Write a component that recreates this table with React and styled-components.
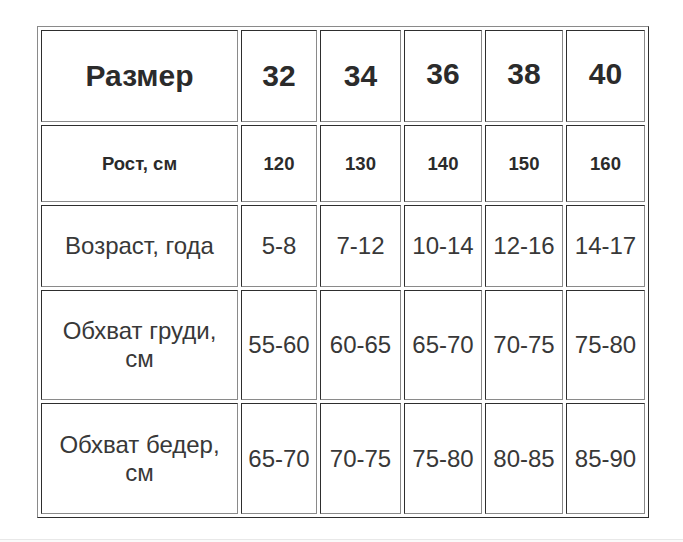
import { Fragment } from "react"
import styled, { createGlobalStyle } from "styled-components"

const GlobalStyle = createGlobalStyle`
  html, body {
    margin: 0;
    padding: 0;
    background: #fff;
    font-family: "Liberation Sans", Arial, sans-serif;
    color: #333;
  }
`

const Page = styled.div`
  padding: 26px 0 0 37px;
`

const SizeTable = styled.div`
  display: grid;
  grid-template-columns: 197px 76px 81px 78px 78px 79px;
  grid-template-rows: 92px 77px 82px 110px 111px;
  gap: 3px;
  padding: 3px;
  width: fit-content;
  border: 1px solid;
  border-color: #8a8a8a #2e2e2e #2e2e2e #8a8a8a;
`

const Cell = styled.div`
  box-sizing: border-box;
  display: flex;
  align-items: center;
  justify-content: center;
  text-align: center;
  border: 1px solid;
  border-color: #2e2e2e #8a8a8a #8a8a8a #2e2e2e;
  padding: 0 2px ${p => (p.$lift ? 5 : 0)}px;
  font-size: ${p => (p.$kind === "head" ? 30 : p.$kind === "sub" ? 18.5 : 24)}px;
  font-weight: ${p => (p.$kind === "data" ? 400 : 700)};
  line-height: 28px;
  color: ${p => (p.$kind === "data" ? "#383838" : "#2b2b2b")};
`

const Footer = styled.div`
  margin-top: 21px;
  height: 3px;
  border-top: 1px solid #e8e8e8;
  background: #fafafa;
`

const sizes = ["32", "34", "36", "38", "40"]
const rows = [
  { label: "Рост, см", kind: "sub", values: ["120", "130", "140", "150", "160"] },
  { label: "Возраст, года", kind: "data", values: ["5-8", "7-12", "10-14", "12-16", "14-17"] },
  { label: ["Обхват груди,", "см"], kind: "data", values: ["55-60", "60-65", "65-70", "70-75", "75-80"] },
  { label: ["Обхват бедер,", "см"], kind: "data", values: ["65-70", "70-75", "75-80", "80-85", "85-90"] },
]

export default function App() {
  return (
    <>
      <GlobalStyle />
      <Page>
        <SizeTable>
          <Cell $kind="head">Размер</Cell>
          {sizes.map((s, i) => (
            <Cell key={s} $kind="head" $lift={i > 1}>{s}</Cell>
          ))}
          {rows.map(row => (
            <Fragment key={row.values[0]}>
              <Cell $kind={row.kind}>
                {Array.isArray(row.label) ? (
                  <span>{row.label[0]}<br />{row.label[1]}</span>
                ) : row.label}
              </Cell>
              {row.values.map(v => (
                <Cell key={v} $kind={row.kind}>{v}</Cell>
              ))}
            </Fragment>
          ))}
        </SizeTable>
      </Page>
      <Footer />
    </>
  )
}
